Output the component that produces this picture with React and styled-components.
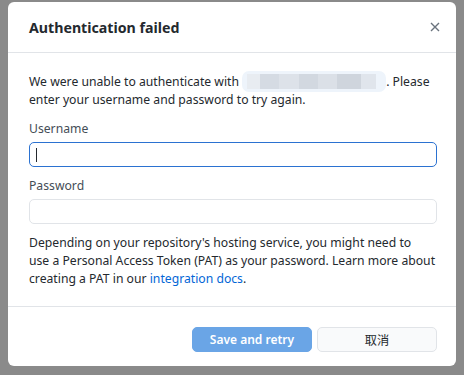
import React from 'react';
import styled, { createGlobalStyle } from 'styled-components';

const GlobalStyle = createGlobalStyle`
  html, body {
    margin: 0;
    padding: 0;
    background: #8a8a8a;
  }
  * {
    box-sizing: border-box;
  }
`;

const Overlay = styled.div`
  padding: 2px 8px;
  font-family: "Noto Sans", "Noto Sans CJK SC", sans-serif;
  font-size: 12.2px;
  color: #24292e;
`;

const Dialog = styled.div`
  width: 448px;
  height: 364px;
  background: #fff;
  border-radius: 6px;
  display: flex;
  flex-direction: column;
  overflow: hidden;
`;

const Header = styled.div`
  height: 51px;
  border-bottom: 1px solid #e1e4e8;
  display: flex;
  align-items: center;
  justify-content: space-between;
  padding: 0 13px 0 21px;
`;

const Title = styled.h1`
  margin: 0;
  font-size: 14.2px;
  font-weight: 700;
  color: #24292e;
`;

const CloseButton = styled.button`
  border: none;
  background: none;
  padding: 0;
  width: 16px;
  height: 16px;
  display: flex;
  align-items: center;
  justify-content: center;
  color: #6a737d;
  cursor: pointer;
`;

const Body = styled.div`
  flex: 1;
  padding: 20px 19px 0 21px;
  border-bottom: 1px solid #e1e4e8;
  line-height: 18px;
`;

const Paragraph = styled.p`
  margin: 0;
`;

const Redacted = styled.span`
  display: inline-block;
  vertical-align: middle;
  width: 144px;
  height: 21px;
  margin: -4px 0 -2px 0;
  border-radius: 7px;
  padding: 3px 10px 3px 5px;
  background: #eef4fb;
`;

const RedactedInner = styled.span`
  display: block;
  height: 100%;
  background: linear-gradient(
    90deg,
    #e8ecf1 0 10%,
    #d5dbe3 10% 25%,
    #dde2e9 25% 40%,
    #d2d8e0 40% 55%,
    #dbe0e7 55% 70%,
    #cfd5dd 70% 88%,
    #e0e5ec 88% 100%
  );
`;

const Field = styled.div`
  margin-top: ${p => p.$top}px;
  display: flex;
  flex-direction: column;
  gap: 4px;
`;

const Label = styled.label`
  color: #444d56;
`;

const Input = styled.input`
  height: 25px;
  width: 100%;
  border: 1px solid ${p => (p.$focused ? '#2b72d1' : '#e1e4e8')};
  border-radius: 5px;
  padding: 0 5px;
  font: inherit;
  color: #24292e;
  outline: none;
  background: #fff;
`;

const Help = styled.p`
  margin: 10px -4px 0 0;
  white-space: nowrap;
`;

const Link = styled.a`
  color: #0366d6;
  text-decoration: none;
`;

const Footer = styled.div`
  height: 59px;
  display: flex;
  justify-content: flex-end;
  align-items: flex-start;
  gap: 5px;
  padding: 20px 19px 0 0;
`;

const Button = styled.button`
  width: 120px;
  height: 25px;
  border-radius: 5px;
  font-family: inherit;
  font-size: ${p => (p.$primary ? 12 : 12.2)}px;
  font-weight: ${p => (p.$primary ? 600 : 400)};
  background: ${p => (p.$primary ? '#6aa5e6' : '#f9fafb')};
  color: ${p => (p.$primary ? '#fff' : '#24292e')};
  border: 1px solid ${p => (p.$primary ? '#6aa5e6' : '#e1e4e8')};
  cursor: pointer;
`;

const Caret = styled.span`
  display: inline-block;
  width: 1px;
  height: 14px;
  background: #24292e;
`;

const InputWrap = styled.div`
  position: relative;
  ${Caret} {
    position: absolute;
    left: 7px;
    top: 6px;
  }
`;

export default function App() {
  return (
    <>
      <GlobalStyle />
      <Overlay>
        <Dialog>
          <Header>
            <Title>Authentication failed</Title>
            <CloseButton aria-label="Close">
              <svg width="10" height="10" viewBox="0 0 10 10">
                <path d="M1 1L9 9M9 1L1 9" stroke="currentColor" strokeWidth="1.4" />
              </svg>
            </CloseButton>
          </Header>
          <Body>
            <Paragraph>
              We were unable to authenticate with{' '}
              <Redacted>
                <RedactedInner />
              </Redacted>
              . Please enter your username and password to try again.
            </Paragraph>
            <Field $top={11}>
              <Label>Username</Label>
              <InputWrap>
                <Input $focused />
                <Caret />
              </InputWrap>
            </Field>
            <Field $top={10}>
              <Label>Password</Label>
              <Input type="password" />
            </Field>
            <Help>
              Depending on your repository's hosting service, you might need to
              <br />
              use a Personal Access Token (PAT) as your password. Learn more about
              <br />
              creating a PAT in our <Link href="#">integration docs</Link>.
            </Help>
          </Body>
          <Footer>
            <Button $primary>Save and retry</Button>
            <Button>取消</Button>
          </Footer>
        </Dialog>
      </Overlay>
    </>
  );
}
